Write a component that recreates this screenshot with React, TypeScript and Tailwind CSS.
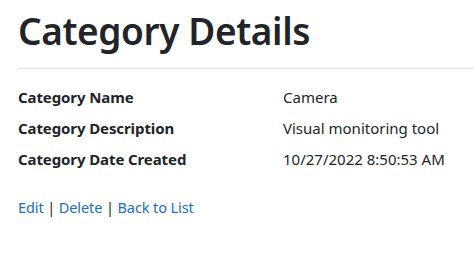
export default function App() {
  const rows = [
    { label: "Category Name", value: "Camera" },
    { label: "Category Description", value: "Visual monitoring tool" },
    { label: "Category Date Created", value: "10/27/2022 8:50:53 AM" },
  ];

  return (
    <div
      className="w-[474px] h-[258px] bg-white text-[#212529] pl-[18px] pt-[7px] overflow-hidden"
      style={{ fontFamily: '"Noto Sans", "Open Sans", sans-serif' }}
    >
      <h1 className="text-[37px] leading-[48px] font-semibold tracking-[-0.4px]">Category Details</h1>

      <div>
        <hr className="mt-[13px] mb-[16px] border-t border-[#e3e3e3]" />
        <dl className="text-[15px]">
          {rows.map((r) => (
            <div key={r.label} className="flex h-[31px] items-start leading-[24px]">
              <dt className="w-[265px] font-bold tracking-[-0.1px]">{r.label}</dt>
              <dd>{r.value}</dd>
            </div>
          ))}
        </dl>
      </div>

      <div className="mt-[17px] text-[14.5px] leading-[24px] tracking-[-0.1px]">
        <a href="#" className="text-[#1b6ec2]">Edit</a> |{" "}
        <a href="#" className="text-[#1b6ec2]">Delete</a> |{" "}
        <a href="#" className="text-[#1b6ec2]">Back to List</a>
      </div>
    </div>
  );
}
